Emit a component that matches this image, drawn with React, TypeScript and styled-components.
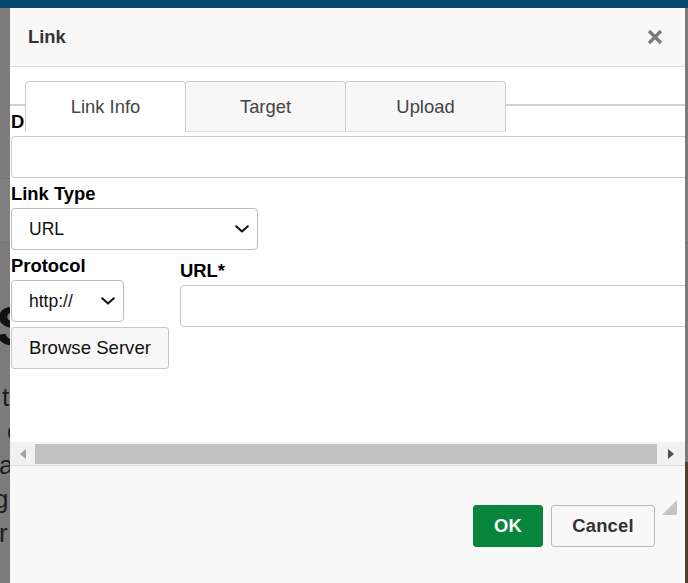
import React from "react";
import styled, { createGlobalStyle } from "styled-components";

const GlobalStyle = createGlobalStyle`
  html, body {
    margin: 0;
    padding: 0;
    width: 688px;
    height: 583px;
    overflow: hidden;
    font-family: "Liberation Sans", Arial, Helvetica, sans-serif;
  }
  * { box-sizing: border-box; }
`;

/* ---------- page behind the dialog ---------- */

const Backdrop = styled.div`
  position: relative;
  width: 688px;
  height: 583px;
  overflow: hidden;
  background: #7b7b7b;
  display: flex;
  flex-direction: column;
`;

const TopBand = styled.div`
  height: 8px;
  flex: none;
  background: #04496c;
`;

const BgBand = styled.div`
  margin-top: 170px;
  height: 65px;
  flex: none;
  border-top: 1px solid #727272;
  border-bottom: 1px solid #727272;
  background: #7f7f7f;
`;

const BigLetter = styled.div`
  margin-top: 55px;
  margin-left: -4px;
  font-size: 56px;
  line-height: 56px;
  font-weight: 700;
  color: #111;
`;

const BgText = styled.div`
  margin-top: 26px;
  font-size: 26px;
  line-height: 34px;
  color: #1d1d1d;
`;

const BgLine = styled.div<{ $indent: number }>`
  margin-left: ${(p) => p.$indent}px;
  white-space: nowrap;
`;

const SideImage = styled.div`
  position: absolute;
  right: 0;
  top: 462px;
  width: 4px;
  height: 121px;
  background: #4e4038;
`;

/* ---------- dialog ---------- */

const Dialog = styled.div`
  position: absolute;
  left: 10px;
  top: 8px;
  width: 675px;
  height: 575px;
  display: flex;
  flex-direction: column;
  background: #fff;
  overflow: hidden;
`;

const Header = styled.div`
  height: 59px;
  flex: none;
  display: flex;
  align-items: center;
  justify-content: space-between;
  padding: 0 22px 0 18px;
  background: #f8f8f8;
  border-bottom: 1px solid #dcdcdc;
`;

const Title = styled.div`
  font-size: 18.4px;
  font-weight: 700;
  color: #333;
`;

const CloseButton = styled.div`
  width: 16px;
  height: 16px;
  display: flex;
  align-items: center;
  justify-content: center;
`;

const Body = styled.div`
  height: 375px;
  flex: none;
  overflow: hidden;
  background: #fff;
`;

const TabBar = styled.div`
  margin-top: 14px;
  height: 25px;
  display: flex;
  padding-left: 15px;
  border-bottom: 2px solid #d1d1d1;
`;

const Tab = styled.div<{ $active?: boolean }>`
  position: relative;
  z-index: 1;
  flex: none;
  width: 161px;
  height: 51px;
  padding-top: 14px;
  text-align: center;
  font-size: 18.4px;
  line-height: 21px;
  color: #444;
  background: ${(p) => (p.$active ? "#fff" : "#f7f7f7")};
  border: 1px solid #cdcdcd;
  border-bottom: ${(p) => (p.$active ? "none" : "1px solid #dcdcdc")};
  border-radius: 4px 4px 0 0;
  & + & {
    margin-left: -1px;
  }
`;

const Panel = styled.div`
  width: 760px;
  padding-left: 1px;
`;

const Label = styled.div`
  margin-top: 5px;
  margin-bottom: 4px;
  font-size: 18.4px;
  font-weight: 700;
  line-height: 21px;
  color: #000;
  white-space: nowrap;
`;

const TextInput = styled.div<{ $width: number }>`
  width: ${(p) => p.$width}px;
  height: 42px;
  border: 1px solid #c9c9c9;
  border-radius: 4px;
  background: #fff;
`;

const SelectBox = styled.div<{ $width: number }>`
  width: ${(p) => p.$width}px;
  height: 42px;
  display: flex;
  align-items: center;
  justify-content: space-between;
  padding: 0 8px 0 17px;
  border: 1px solid #bdbdbd;
  border-radius: 4px;
  background: #fff;
  font-size: 17.5px;
  color: #111;
`;

const Row = styled.div`
  display: flex;
  align-items: flex-start;
`;

const ProtocolCol = styled.div`
  width: 169px;
  flex: none;
`;

const UrlCol = styled.div`
  flex: 1;
  padding-top: 4.5px;
`;

const BrowseButton = styled.div`
  display: inline-flex;
  align-items: center;
  margin-top: 5px;
  height: 42px;
  padding: 0 17px;
  border: 1px solid #c8c8c8;
  border-radius: 3px;
  background: #f7f7f7;
  font-size: 18.6px;
  color: #111;
  white-space: nowrap;
`;

const Scrollbar = styled.div`
  height: 23px;
  flex: none;
  display: flex;
  align-items: flex-start;
  padding-top: 2px;
  background: #f1f1f1;
`;

const ScrollArrow = styled.div<{ $width: number }>`
  width: ${(p) => p.$width}px;
  height: 20px;
  flex: none;
  display: flex;
  align-items: center;
  justify-content: center;
`;

const Thumb = styled.div`
  flex: 1;
  height: 20px;
  background: #c1c1c1;
`;

const Footer = styled.div`
  position: relative;
  flex: 1;
  display: flex;
  justify-content: flex-end;
  align-items: flex-start;
  gap: 8px;
  padding: 39px 30px 0 0;
  background: #f8f8f8;
  border-top: 1px solid #dcdcdc;
`;

const Button = styled.div<{ $primary?: boolean; $width: number }>`
  width: ${(p) => p.$width}px;
  height: 42px;
  display: flex;
  align-items: center;
  justify-content: center;
  border-radius: 3px;
  font-size: 18.4px;
  font-weight: 700;
  letter-spacing: 0.2px;
  color: ${(p) => (p.$primary ? "#fff" : "#333")};
  background: ${(p) => (p.$primary ? "#08853d" : "#f8f8f8")};
  border: 1px solid ${(p) => (p.$primary ? "#08853d" : "#b9b9b9")};
`;

const ResizeGrip = styled.div`
  position: absolute;
  top: 34px;
  right: 8px;
  width: 0;
  height: 0;
  border-style: solid;
  border-width: 0 0 15px 15px;
  border-color: transparent transparent #c4c4c4 transparent;
`;

const Chevron = () => (
  <svg width="14" height="8" viewBox="0 0 14 8">
    <polyline
      points="1.2,1.2 7,6.6 12.8,1.2"
      fill="none"
      stroke="#111"
      strokeWidth="2"
      strokeLinecap="round"
      strokeLinejoin="round"
    />
  </svg>
);

const CloseIcon = () => (
  <svg width="16" height="16" viewBox="0 0 16 16">
    <path
      d="M2 2 L14 14 M14 2 L2 14"
      stroke="#7a7a7a"
      strokeWidth="3.2"
      strokeLinecap="butt"
    />
  </svg>
);

const ArrowLeft = () => (
  <svg width="6" height="10" viewBox="0 0 6 10">
    <polygon points="6,0 0,5 6,10" fill="#a3a3a3" />
  </svg>
);

const ArrowRight = () => (
  <svg width="6" height="10" viewBox="0 0 6 10">
    <polygon points="0,0 6,5 0,10" fill="#505050" />
  </svg>
);

export default function App() {
  return (
    <>
      <GlobalStyle />
      <Backdrop>
        <TopBand />
        <BgBand />
        <BigLetter>S</BigLetter>
        <BgText>
          <BgLine $indent={2}>the</BgLine>
          <BgLine $indent={7}>co</BgLine>
          <BgLine $indent={-1}>al</BgLine>
          <BgLine $indent={-6}>gh</BgLine>
          <BgLine $indent={-1}>r</BgLine>
        </BgText>
        <SideImage />

        <Dialog>
          <Header>
            <Title>Link</Title>
            <CloseButton>
              <CloseIcon />
            </CloseButton>
          </Header>

          <Body>
            <TabBar>
              <Tab $active>Link Info</Tab>
              <Tab>Target</Tab>
              <Tab>Upload</Tab>
            </TabBar>

            <Panel>
              <Label>Display Text</Label>
              <TextInput $width={720} />

              <Label>Link Type</Label>
              <SelectBox $width={247}>
                <span>URL</span>
                <Chevron />
              </SelectBox>

              <Row>
                <ProtocolCol>
                  <Label>Protocol</Label>
                  <SelectBox $width={113}>
                    <span>http://</span>
                    <Chevron />
                  </SelectBox>
                  <BrowseButton>Browse Server</BrowseButton>
                </ProtocolCol>
                <UrlCol>
                  <Label>URL*</Label>
                  <TextInput $width={560} />
                </UrlCol>
              </Row>
            </Panel>
          </Body>

          <Scrollbar>
            <ScrollArrow $width={25}>
              <ArrowLeft />
            </ScrollArrow>
            <Thumb />
            <ScrollArrow $width={28}>
              <ArrowRight />
            </ScrollArrow>
          </Scrollbar>

          <Footer>
            <Button $primary $width={70}>OK</Button>
            <Button $width={104}>Cancel</Button>
            <ResizeGrip />
          </Footer>
        </Dialog>
      </Backdrop>
    </>
  );
}
